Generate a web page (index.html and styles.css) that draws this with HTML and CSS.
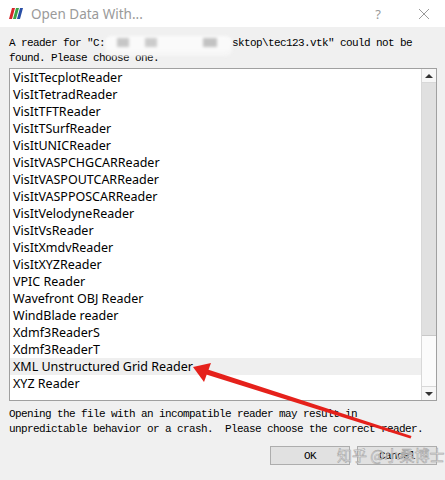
FILE: index.html
```html
<!DOCTYPE html>
<html lang="en">
  <head>
    <meta charset="UTF-8" />
    <meta name="viewport" content="width=device-width, initial-scale=1.0" />
    <title>Open Data With...</title>
    <link rel="stylesheet" href="styles.css">
  </head>
  <body>
    <div class="dialog">
      <header class="titlebar">
        <svg class="app-icon" width="14" height="11" viewBox="0 0 14 11" aria-hidden="true">
          <polygon points="3,0 6,0 3,11 0,11" fill="#d6262b" />
          <polygon points="7,0 10,0 7,11 4,11" fill="#3aa346" />
          <polygon points="11,0 14,0 11,11 8,11" fill="#2a4fa6" />
        </svg>
        <span class="title">Open Data With...</span>
        <span class="help">?</span>
        <svg class="close" width="12" height="12" viewBox="0 0 12 12" aria-hidden="true">
          <path d="M1 1 L11 11 M11 1 L1 11" stroke="#9a9a9a" stroke-width="1" fill="none" />
        </svg>
      </header>

      <div class="content">
        <p class="msg">A reader for "C:<span class="blurred"></span>sktop\tec123.vtk" could not be<br>found. Please choose one.</p>

        <div class="list">
          <ul class="rows">
            <li>VisItTecplotReader</li>
            <li>VisItTetradReader</li>
            <li>VisItTFTReader</li>
            <li>VisItTSurfReader</li>
            <li>VisItUNICReader</li>
            <li>VisItVASPCHGCARReader</li>
            <li>VisItVASPOUTCARReader</li>
            <li>VisItVASPPOSCARReader</li>
            <li>VisItVelodyneReader</li>
            <li>VisItVsReader</li>
            <li>VisItXmdvReader</li>
            <li>VisItXYZReader</li>
            <li>VPIC Reader</li>
            <li>Wavefront OBJ Reader</li>
            <li>WindBlade reader</li>
            <li>Xdmf3ReaderS</li>
            <li>Xdmf3ReaderT</li>
            <li class="hover">XML Unstructured Grid Reader</li>
            <li>XYZ Reader</li>
          </ul>
          <div class="scrollbar">
            <div class="sb-btn"><span class="tri up"></span></div>
            <div class="sb-thumb"></div>
            <div class="sb-track"></div>
            <div class="sb-btn"><span class="tri down"></span></div>
          </div>
        </div>

        <p class="msg note">Opening the file with an incompatible reader may result in<br>unpredictable behavior or a crash.  Please choose the correct reader.</p>

        <div class="buttons">
          <button class="btn">OK</button>
          <button class="btn">Cancel</button>
        </div>
      </div>

      <svg class="arrow" width="445" height="480" viewBox="0 0 445 480" aria-hidden="true">
        <polygon points="193,367 211,363 204,382" fill="#e5211b" />
        <polygon points="207.8,369.6 411.5,436 410.5,438.5 206.2,374.4" fill="#e5211b" />
      </svg>
      <span class="watermark">知乎 @小桑博士</span>
    </div>
  </body>
</html>
```

FILE: styles.css
```css
body {
  margin: 0;
  background: #f0f0f0;
}

.dialog {
  position: relative;
  width: 445px;
  height: 480px;
  background: #f0f0f0;
  overflow: hidden;
}

.titlebar {
  display: flex;
  align-items: center;
  height: 27px;
  background: #fff;
  padding-left: 9px;
  box-sizing: border-box;
}

.app-icon {
  margin-top: -1px;
}

.title {
  margin-left: 8px;
  font-family: "Noto Sans", sans-serif;
  font-size: 13.5px;
  color: #9a9a9a;
  flex: 1;
}

.help {
  font-family: "Noto Sans", sans-serif;
  font-size: 13px;
  color: #9a9a9a;
  margin-right: 37px;
}

.close {
  margin-right: 15px;
}

.content {
  padding: 0 8px 0 9px;
}

.msg {
  margin: 9px 0 0;
  font-family: "Liberation Mono", monospace;
  font-size: 11px;
  letter-spacing: -0.6px;
  line-height: 15px;
  color: #000;
  white-space: pre;
}

.blurred {
  display: inline-block;
  width: 127px;
  height: 15px;
  vertical-align: top;
  border-radius: 6px;
  background:
    linear-gradient(90deg, transparent 12px, #c6c6c6 12px, #c6c6c6 24px, transparent 24px, transparent 40px, #cbcbcb 40px, #cbcbcb 52px, transparent 52px, transparent 98px, #c2c2c2 98px, #c2c2c2 112px, transparent 112px) 0 2px / 100% 9px no-repeat,
    #fafafa;
  box-shadow: 0 5px 0 #f6f6f6;
  filter: blur(1.5px);
}

.list {
  display: flex;
  margin-top: 2px;
  height: 333px;
  border: 1px solid #a0a0a0;
  background: #fff;
  box-sizing: border-box;
}

.rows {
  flex: 1;
  list-style: none;
  margin: 0;
  padding: 0;
}

.rows li {
  height: 17px;
  line-height: 17px;
  padding-left: 3px;
  font-family: "Noto Sans", sans-serif;
  font-size: 12.5px;
  color: #000;
}

.rows li.hover {
  background: #efefef;
}

.scrollbar {
  display: flex;
  flex-direction: column;
  width: 14px;
  border-left: 1px solid #d8d8d8;
  background: #fafafa;
}

.sb-btn {
  height: 13px;
  display: flex;
  align-items: center;
  justify-content: center;
  background: #f7f7f7;
  border-bottom: 1px solid #d8d8d8;
}

.sb-btn:last-child {
  border-bottom: 0;
  border-top: 1px solid #d8d8d8;
}

.tri {
  width: 0;
  height: 0;
  border-left: 4px solid transparent;
  border-right: 4px solid transparent;
}

.tri.up {
  border-bottom: 4px solid #333;
}

.tri.down {
  border-top: 4px solid #333;
}

.sb-thumb {
  height: 252px;
  background: #e0e0e0;
  border-bottom: 1px solid #c8c8c8;
}

.sb-track {
  flex: 1;
  background: #fbfbfb;
}

.note {
  margin-top: 6px;
}

.buttons {
  display: flex;
  justify-content: flex-end;
  gap: 7px;
  margin-top: 9px;
}

.btn {
  width: 80px;
  height: 19px;
  padding: 0;
  border: 1px solid #adadad;
  background: #e1e1e1;
  font-family: "Liberation Mono", monospace;
  font-size: 11px;
  letter-spacing: -0.6px;
  color: #000;
}

.arrow {
  position: absolute;
  left: 0;
  top: 0;
  pointer-events: none;
}

.watermark {
  position: absolute;
  left: 337px;
  top: 444px;
  font-family: "Noto Sans CJK SC", sans-serif;
  font-size: 15px;
  color: rgba(255, 255, 255, 0.6);
  -webkit-text-stroke: 0.6px #a8a8a8;
  pointer-events: none;
}
```
